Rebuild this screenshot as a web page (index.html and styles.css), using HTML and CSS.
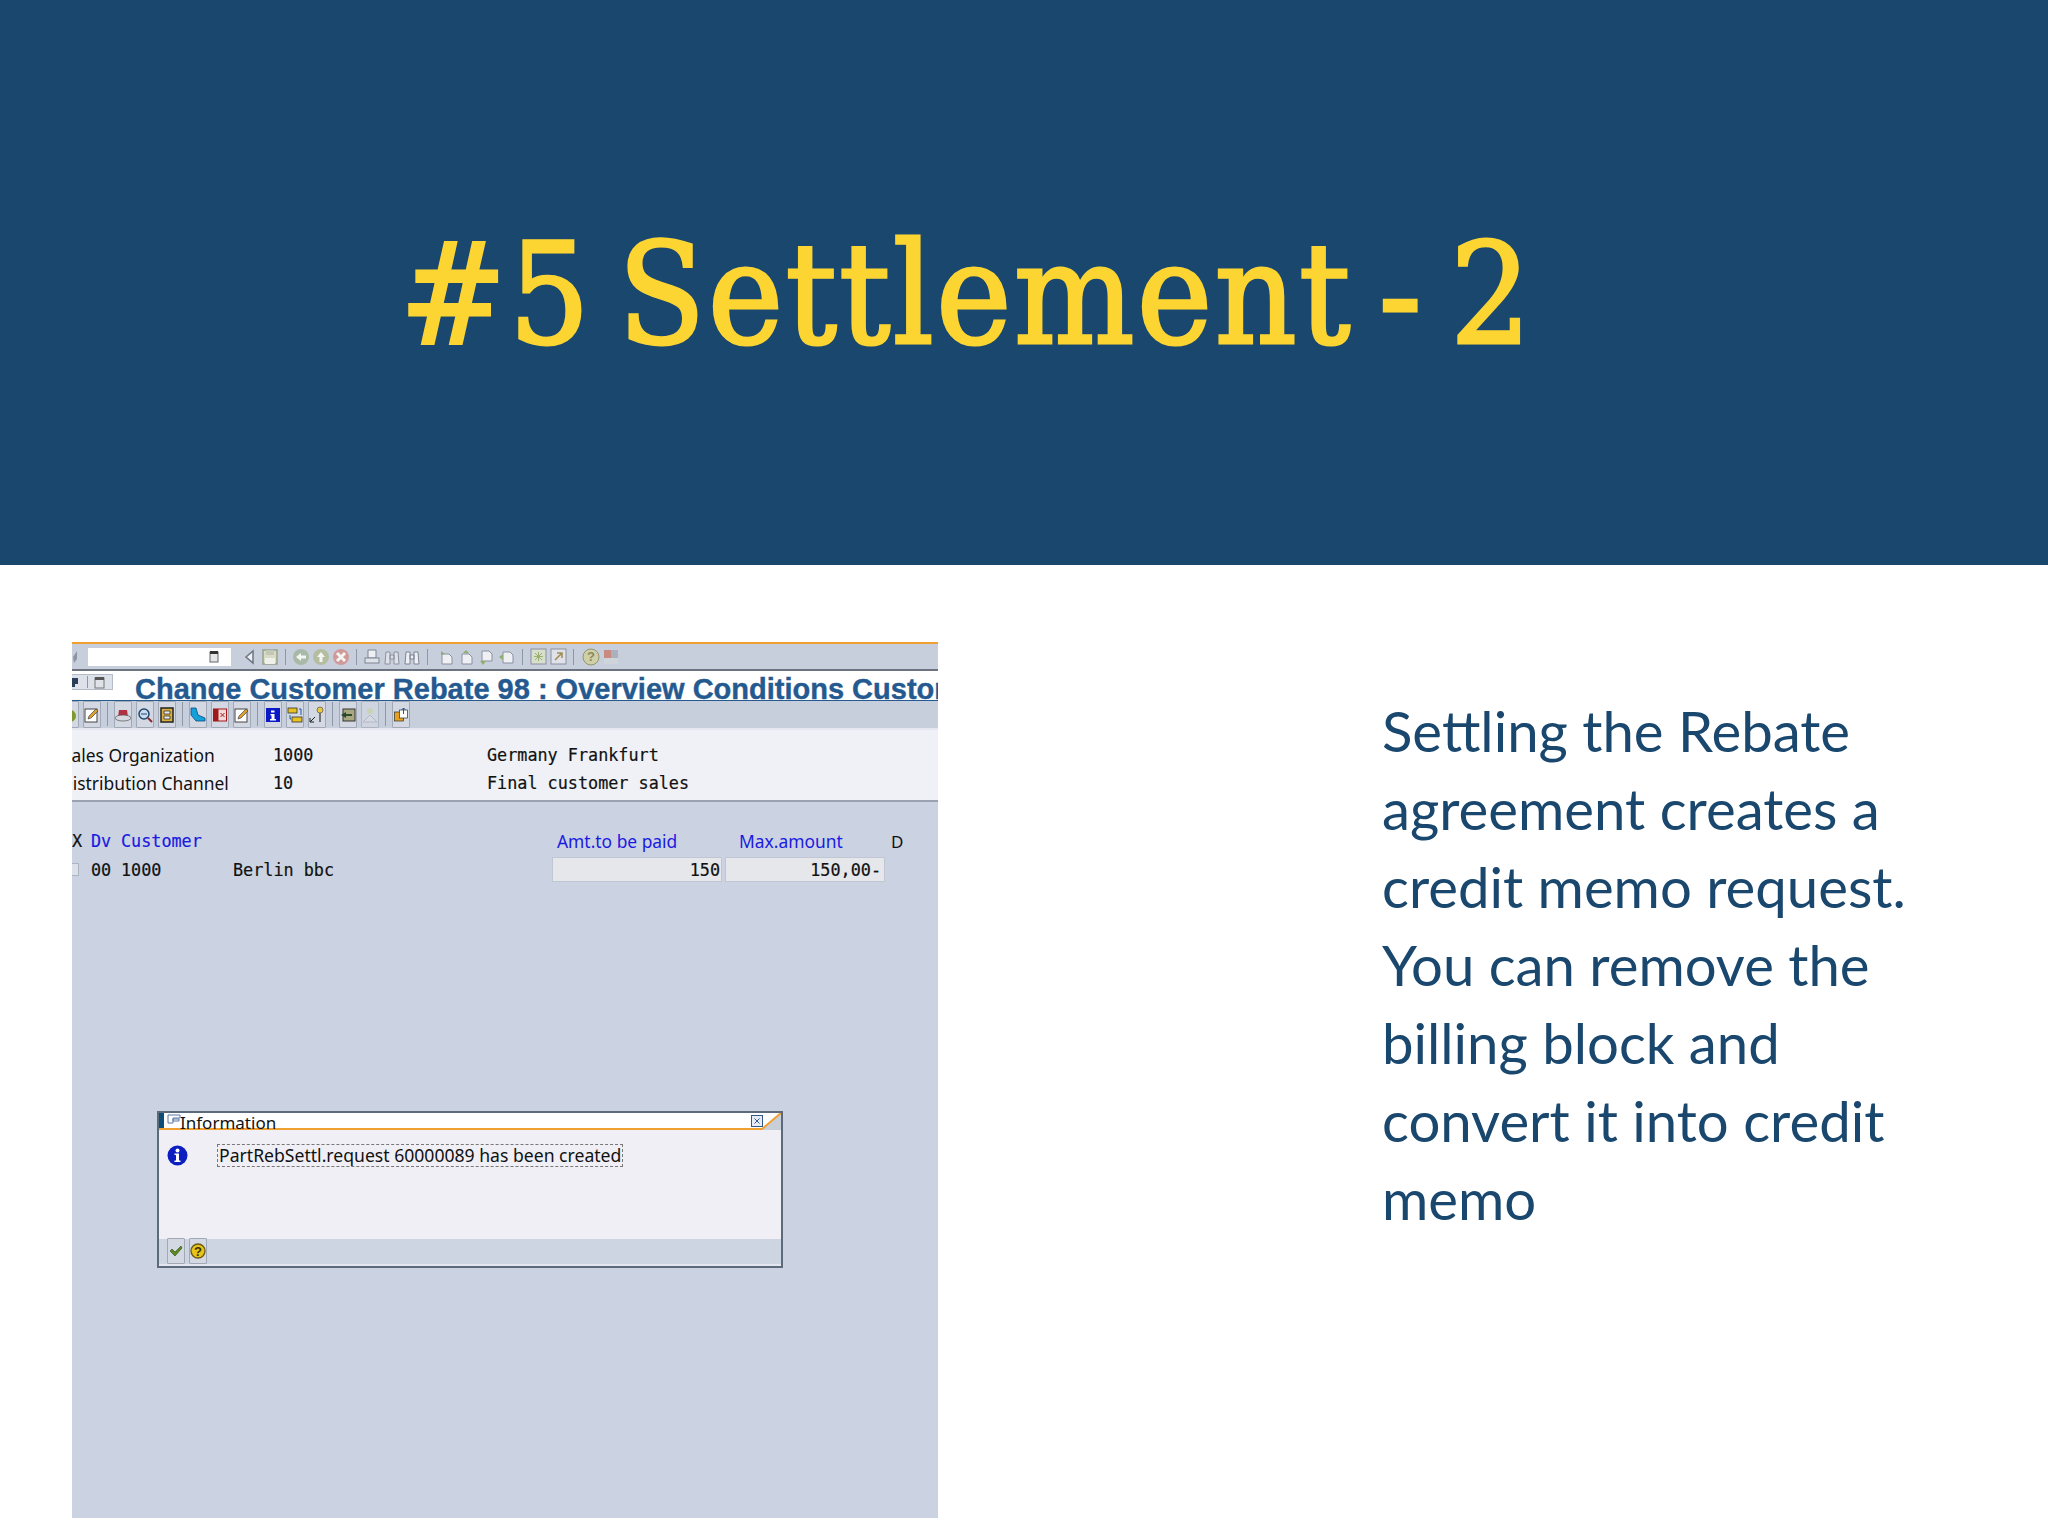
FILE: index.html
```html
<!DOCTYPE html>
<html lang="en">
<head>
    <meta charset="UTF-8">
    <title>#5 Settlement - 2</title>
    <link rel="stylesheet" href="styles.css">
</head>
<body>
    <header class="banner">
        <h1>#5 Settlement - 2</h1>
    </header>
    <main class="content">
        <div class="sap">
            <div class="sap-top">
                <span class="sap-cut"><svg width="6" height="14" viewBox="0 0 6 14"><path d="M5 1L1 7l1 6 3-4z" fill="#8e95a2"/></svg></span>
                <div class="sap-input">
                    <svg width="10" height="13" viewBox="0 0 10 13"><rect x="1" y="2" width="8" height="10" fill="#e4e6ea" stroke="#666"/><rect x="1" y="1" width="8" height="3" fill="#333"/></svg>
                </div>
                <span class="ico"><svg width="14" height="16" viewBox="0 0 14 16"><path d="M10 2L3 8l7 6z" fill="#eef0f4" stroke="#6d7480" stroke-width="1.5"/></svg></span>
                <span class="ico"><svg width="16" height="16" viewBox="0 0 16 16"><rect x="1" y="1" width="14" height="14" fill="#d8dbc8" stroke="#98a08c" stroke-width="1.5"/><rect x="4" y="1" width="8" height="5" fill="#c2c8b6"/><rect x="3" y="9" width="10" height="6" fill="#eef0ea"/></svg></span>
                <i class="sep"></i>
                <span class="ico"><svg width="18" height="18" viewBox="0 0 18 18"><circle cx="9" cy="9" r="8" fill="#a9b9a8"/><path d="M4 9l5-4v2.500h5v3H9V13z" fill="#f4f6f2"/></svg></span>
                <span class="ico"><svg width="18" height="18" viewBox="0 0 18 18"><circle cx="9" cy="9" r="8" fill="#b5bda0"/><path d="M9 4l4 5h-2.500v5h-3V9H5z" fill="#f4f6f2"/></svg></span>
                <span class="ico"><svg width="18" height="18" viewBox="0 0 18 18"><circle cx="9" cy="9" r="8" fill="#d09a9a"/><path d="M5 5l8 8M13 5l-8 8" stroke="#f4f6f2" stroke-width="3"/></svg></span>
                <i class="sep"></i>
                <span class="ico"><svg width="18" height="18" viewBox="0 0 18 18"><path d="M5 2h8v8H5z" fill="#eef0f4" stroke="#7c8492"/><rect x="2" y="10" width="14" height="5" fill="#dfe2e8" stroke="#7c8492"/></svg></span>
                <span class="ico"><svg width="18" height="18" viewBox="0 0 18 18"><path d="M3 4h4v12H2zM11 4h4l1 12h-5zM7 7h4v4H7z" fill="#dfe2e8" stroke="#8a90a0"/></svg></span>
                <span class="ico"><svg width="18" height="18" viewBox="0 0 18 18"><path d="M3 4h4v12H2zM11 4h4l1 12h-5zM7 7h4v4H7z" fill="#eef0f4" stroke="#7c8492"/></svg></span>
                <i class="sep sep-wide"></i>
                <span class="ico"><svg width="18" height="18" viewBox="0 0 18 18"><path d="M4 6h7l3 3v7H4z" fill="#eef0f4" stroke="#8a90a0"/><path d="M3 3l4 3-4 1z" fill="#8fae70"/></svg></span>
                <span class="ico"><svg width="18" height="18" viewBox="0 0 18 18"><path d="M4 6h7l3 3v7H4z" fill="#eef0f4" stroke="#8a90a0"/><path d="M8 2l3 3H5z" fill="#8fae70"/></svg></span>
                <span class="ico"><svg width="18" height="18" viewBox="0 0 18 18"><path d="M4 3h7l3 3v7H4z" fill="#eef0f4" stroke="#8a90a0"/><path d="M5 17l3-4H2z" fill="#8fae70"/></svg></span>
                <span class="ico"><svg width="18" height="18" viewBox="0 0 18 18"><path d="M5 4h7l3 3v8H5z" fill="#eef0f4" stroke="#8a90a0"/><path d="M1 9l4-3v6z" fill="#8fae70"/></svg></span>
                <i class="sep"></i>
                <span class="ico"><svg width="17" height="17" viewBox="0 0 17 17"><rect x="1" y="1" width="15" height="15" fill="#d8dfcc" stroke="#8a90a0"/><path d="M4 8.500h9M8.500 4v9M5 5l7 7M12 5l-7 7" stroke="#9ab070"/></svg></span>
                <span class="ico"><svg width="17" height="17" viewBox="0 0 17 17"><rect x="1" y="1" width="15" height="15" fill="#dfe2e8" stroke="#8a90a0"/><path d="M5 12l6-6M7 5h5v5" fill="none" stroke="#a08a50" stroke-width="1.500"/></svg></span>
                <i class="sep"></i>
                <span class="ico ico-help"><svg width="18" height="18" viewBox="0 0 18 18"><circle cx="9" cy="9" r="8" fill="#cfcfa8" stroke="#94946e"/><text x="9" y="13" class="ico-q">?</text></svg></span>
                <span class="ico"><svg width="16" height="18" viewBox="0 0 16 18"><rect x="1" y="2" width="7" height="8" fill="#c98a80"/><rect x="8" y="2" width="7" height="8" fill="#aab0bc"/><rect x="1" y="10" width="14" height="6" fill="#cfd3da"/></svg></span>
            </div>

            <div class="sap-title">
                <span class="sap-mini">
                    <svg width="8" height="13" viewBox="0 0 8 13"><path d="M0 2h6v6H3v3H0z" fill="#2a3f5a"/></svg>
                    <i class="sep"></i>
                    <svg width="11" height="13" viewBox="0 0 11 13"><rect x="1" y="2" width="9" height="10" fill="#dfe2e8" stroke="#777"/><rect x="1" y="1" width="9" height="3" fill="#555"/></svg>
                </span>
                <h2>Change Customer Rebate 98 : Overview Conditions Customer</h2>
            </div>

            <div class="sap-tools">
                <span class="btn btn-cut"><svg width="14" height="18" viewBox="0 0 14 18"><ellipse cx="7" cy="10" rx="6" ry="6" fill="#7e9a2c"/><path d="M2 3l5 3" stroke="#333"/></svg></span>
                <span class="btn"><svg width="16" height="16" viewBox="0 0 16 16"><rect x="1" y="2" width="12" height="13" fill="#fff" stroke="#444"/><path d="M4 12l1-3 7-7 2 2-7 7z" fill="#e0a030" stroke="#444" stroke-width=".7"/></svg></span>
                <i class="sep"></i>
                <span class="btn"><svg width="16" height="14" viewBox="0 0 16 14"><path d="M4 2h8l1 7H3z" fill="#b03040"/><ellipse cx="8" cy="10" rx="8" ry="3" fill="#d8d8e0" stroke="#555" stroke-width=".7"/></svg></span>
                <span class="btn"><svg width="16" height="16" viewBox="0 0 16 16"><circle cx="7" cy="7" r="5" fill="#c8def0" stroke="#24456e" stroke-width="1.500"/><path d="M11 11l4 4" stroke="#8a2a2a" stroke-width="2"/><path d="M4 7h6" stroke="#24456e"/></svg></span>
                <span class="btn"><svg width="14" height="16" viewBox="0 0 14 16"><rect x="1" y="1" width="12" height="14" fill="#d8b040" stroke="#222" stroke-width="1.500"/><path d="M4 4h6v3H4zM4 9h6v3H4z" fill="#e8e8e8" stroke="#222" stroke-width=".7"/></svg></span>
                <i class="sep"></i>
                <span class="btn"><svg width="16" height="16" viewBox="0 0 16 16"><path d="M1 1h5l2 7 7 3v3H6L1 8z" fill="#14a0d8" stroke="#0c4a80" stroke-width=".8"/></svg></span>
                <span class="btn"><svg width="15" height="15" viewBox="0 0 15 15"><rect x="1" y="2" width="13" height="12" fill="#f2d8d8" stroke="#a01818"/><rect x="1" y="2" width="5" height="12" fill="#a01818"/><path d="M8 6l4 4M12 6l-4 4" stroke="#a01818"/></svg></span>
                <span class="btn"><svg width="16" height="16" viewBox="0 0 16 16"><rect x="1" y="2" width="12" height="13" fill="#fff" stroke="#444"/><path d="M4 12l1-3 7-7 2 2-7 7z" fill="#e0a030" stroke="#444" stroke-width=".7"/></svg></span>
                <i class="sep"></i>
                <span class="btn"><svg width="14" height="14" viewBox="0 0 14 14"><rect width="14" height="14" fill="#0a18c8"/><path d="M5 2.500h3.500v2H5zM4.500 6h4v5h1.500v1.500H4V11h1.500V7.500h-1z" fill="#fff"/></svg></span>
                <span class="btn"><svg width="16" height="16" viewBox="0 0 16 16"><rect x="1" y="1" width="9" height="5" fill="#e8c020" stroke="#333" stroke-width=".8"/><rect x="5" y="10" width="10" height="5" fill="#e8c020" stroke="#333" stroke-width=".8"/><path d="M12 2h2v6M3 8v4h1" fill="none" stroke="#1a5aa0"/></svg></span>
                <span class="btn"><svg width="16" height="18" viewBox="0 0 16 18"><circle cx="11" cy="4" r="3" fill="#e8c840" stroke="#555" stroke-width=".7"/><path d="M11 7v9" stroke="#555" stroke-width="1.500"/><path d="M1 16l5-5M1 12v4h4" fill="none" stroke="#222"/></svg></span>
                <i class="sep"></i>
                <span class="btn"><svg width="16" height="14" viewBox="0 0 16 14"><rect x="3" y="1" width="12" height="12" fill="#a8a880" stroke="#333"/><path d="M1 7l5-3v2h6v2H6v2z" fill="#2a4a2a"/></svg></span>
                <span class="btn btn-off"><svg width="16" height="16" viewBox="0 0 16 16"><circle cx="8" cy="4" r="3" fill="#c8d4a8"/><path d="M1 15l7-7 7 7z" fill="#d8dce4" stroke="#aab0bc"/></svg></span>
                <i class="sep"></i>
                <span class="btn"><svg width="15" height="16" viewBox="0 0 15 16"><rect x="1" y="5" width="9" height="9" fill="#e8a020" stroke="#333" stroke-width=".7"/><rect x="6" y="3" width="8" height="8" fill="#fff" stroke="#333" stroke-width=".7"/><path d="M10 1v6M8 3l2-2 2 2" fill="none" stroke="#1a5aa0"/></svg></span>
            </div>

            <div class="sap-head">
                <span class="lbl cut-s">Sales Organization</span>
                <span class="mono">1000</span>
                <span class="mono">Germany Frankfurt</span>
                <span class="lbl cut-d">Distribution Channel</span>
                <span class="mono">10</span>
                <span class="mono">Final customer sales</span>
            </div>

            <div class="sap-table">
                <span class="mono">X</span>
                <span class="mono blue">Dv</span>
                <span class="mono blue">Customer</span>
                <span></span>
                <span class="lbl blue pad-amt">Amt.to be paid</span>
                <span class="lbl blue pad-max">Max.amount</span>
                <span class="lbl pad-d">D</span>

                <span class="check"></span>
                <span class="mono">00</span>
                <span class="mono">1000</span>
                <span class="mono">Berlin bbc</span>
                <span class="mono field field-amt">150</span>
                <span class="mono field">150,00-</span>
                <span></span>
            </div>

            <div class="dialog">
                <div class="dialog-title">
                    <i class="dialog-mark"></i>
                    <svg class="dialog-ico" width="14" height="13" viewBox="0 0 14 13"><path d="M1 1h12v3H6v5H1zM6 5h6v2H6z" fill="#fff" stroke="#5a78a8"/></svg>
                    <span class="dialog-name">Information</span>
                    <span class="dialog-close"><svg width="10" height="10" viewBox="0 0 10 10"><path d="M2.500 2.500l5 5M7.500 2.500l-5 5" stroke="#33588c"/></svg></span>
                    <svg class="dialog-corner" width="24" height="17" viewBox="0 0 24 17"><path d="M24 0v17H4z" fill="#c9cfd9"/><path d="M0 16h5L24 0" fill="none" stroke="#f0a030" stroke-width="2"/></svg>
                </div>
                <div class="dialog-body">
                    <svg width="21" height="21" viewBox="0 0 21 21"><circle cx="10.500" cy="10.500" r="10" fill="#0c1ec0"/><circle cx="10.500" cy="5.500" r="2" fill="#fff"/><path d="M7.500 8.500h4.500v7h1.500v1.500h-6v-1.500H9v-5.500H7.500z" fill="#fff"/></svg>
                    <span class="dialog-msg">PartRebSettl.request 60000089 has been created</span>
                </div>
                <div class="dialog-foot">
                    <span class="btn"><svg width="14" height="12" viewBox="0 0 14 12"><path d="M1 6l2-2 3 3 6-6 1 2-7 8z" fill="#5a8a20" stroke="#2e4a10" stroke-width=".6"/></svg></span>
                    <span class="btn"><svg width="16" height="16" viewBox="0 0 16 16"><circle cx="8" cy="8" r="7" fill="#e8c418" stroke="#6a5a10" stroke-width="1.300"/><text x="8" y="12.500" class="ico-q ico-q-dark">?</text></svg></span>
                </div>
            </div>
        </div>

        <p class="note">Settling the Rebate agreement creates a credit memo request. You can remove the billing block and convert it into credit memo</p>
    </main>
</body>
</html>
```

FILE: styles.css
```css
body {
    margin: 0;
    background: #fff;
    width: 2048px;
    height: 1536px;
    overflow: hidden;
    font-family: "Lato", sans-serif;
}

.banner {
    height: 565px;
    box-sizing: border-box;
    background: #1a476e;
    display: flex;
    align-items: center;
    padding: 22px 0 0 400px;
}
.banner h1 {
    margin: 0;
    color: #fdd532;
    font-family: "DejaVu Serif Condensed", "DejaVu Serif", serif;
    font-weight: 400;
    font-size: 141px;
    letter-spacing: 2.7px;
    word-spacing: -17px;
    -webkit-text-stroke: 3px #fdd532;
    white-space: nowrap;
}

.content {
    display: flex;
    align-items: flex-start;
    padding: 77px 0 0 72px;
}
.note {
    width: 560px;
    margin: 0 0 0 444px;
    padding-top: 49px;
    color: #1a476e;
    font-size: 56.3px;
    line-height: 78px;
}

/* sap screenshot */
.sap {
    position: relative;
    width: 866px;
    height: 876px;
    flex: none;
    overflow: hidden;
    background: #cbd3e2;
    display: flex;
    flex-direction: column;
    color: #111;
}
.sep {
    width: 1px;
    height: 16px;
    background: #8e97a6;
    flex: none;
}
.mono {
    font-family: "DejaVu Sans Mono", monospace;
    font-size: 16.8px;
    -webkit-text-stroke: .2px currentColor;
    white-space: nowrap;
}
.lbl {
    font-family: "Noto Sans", sans-serif;
    font-size: 17.4px;
    white-space: nowrap;
}
.blue {
    color: #1a1ae0;
}

.sap-top {
    height: 25px;
    border-top: 2px solid #f0a030;
    border-bottom: 2px solid #6d7480;
    background: #c8cfdc;
    display: flex;
    align-items: center;
    flex: none;
}
.sap-cut {
    width: 16px;
    height: 14px;
    flex: none;
}
.sap-cut svg {
    display: block;
}
.sap-input {
    width: 143px;
    height: 18px;
    background: #fff;
    display: flex;
    align-items: center;
    justify-content: flex-end;
    padding-right: 12px;
    box-sizing: border-box;
    margin-right: 9px;
}
.ico {
    width: 20px;
    height: 20px;
    display: flex;
    align-items: center;
    justify-content: center;
}
.ico-help {
    margin-left: 2px;
}
.ico-q {
    font-family: "Liberation Sans", sans-serif;
    font-size: 13px;
    font-weight: 700;
    text-anchor: middle;
    fill: #8a8a5c;
}
.ico-q-dark {
    fill: #3a3208;
}
.sap-top .sep {
    margin: 0 5px;
}
.sap-top .sep-wide {
    margin-right: 9px;
}

.sap-title {
    height: 29px;
    background: #fff;
    border-bottom: 1px solid #245a90;
    display: flex;
    overflow: hidden;
    flex: none;
}
.sap-mini {
    width: 41px;
    height: 16px;
    margin: 3px 0 0 0;
    background: #dde1e9;
    border: 1px solid #b5bcc8;
    border-left: 0;
    display: flex;
    align-items: center;
    justify-content: space-between;
    padding: 0 7px 0 0;
    box-sizing: border-box;
    flex: none;
}
.sap-mini .sep {
    height: 12px;
}
.sap-title h2 {
    margin: 2px 0 0 22px;
    color: #245a90;
    font-family: "Liberation Sans", sans-serif;
    font-size: 29px;
    font-weight: 700;
    -webkit-text-stroke: .4px #245a90;
    line-height: 32px;
    white-space: nowrap;
}

.sap-tools {
    height: 27px;
    background: #c8cfdc;
    border-bottom: 2px solid #e4e7ef;
    display: flex;
    gap: 4px;
    margin-left: -11px;
    flex: none;
}
.sap-tools .sep {
    height: 24px;
    margin: 1px 2px 0;
}
.btn {
    width: 18px;
    height: 27px;
    background: #d3d8e2;
    border: 1px solid #a2a9b6;
    box-sizing: border-box;
    display: flex;
    align-items: center;
    justify-content: center;
    flex: none;
    border-radius: 1px;
}
.btn svg {
    width: 16px;
}
.btn-off {
    opacity: .7;
}

.sap-head {
    height: 72px;
    box-sizing: border-box;
    background: #f0f1f6;
    border-bottom: 2px solid #9aa2b0;
    padding-top: 11px;
    display: grid;
    grid-template-columns: 201px 214px 1fr;
    grid-auto-rows: 28px;
    align-items: center;
    overflow: hidden;
    flex: none;
}
.cut-s {
    margin-left: -10px;
}
.cut-d {
    margin-left: -12px;
}

.sap-table {
    padding-top: 25px;
    display: grid;
    grid-template-columns: 19px 30px 112px 319px 173px 160px 1fr;
    grid-template-rows: 28px 25px;
    row-gap: 2px;
    align-items: center;
}
.pad-amt {
    padding-left: 5px;
}
.pad-max {
    padding-left: 14px;
}
.pad-d {
    padding-left: 6px;
    color: #111;
    font-size: 17px;
}
.check {
    width: 6px;
    height: 11px;
    background: #dbe0ea;
    border: 1px solid #aeb5c2;
    border-left: 0;
}
.field {
    height: 25px;
    line-height: 25px;
    box-sizing: border-box;
    background: #e6e7ea;
    border: 1px solid #c0c6d2;
    text-align: right;
    padding-right: 3px;
}
.field-amt {
    padding-right: 1px;
    margin-right: 3px;
}

/* popup */
.dialog {
    position: absolute;
    left: 85px;
    top: 469px;
    width: 626px;
    height: 157px;
    box-sizing: border-box;
    border: 2px solid #5d6a7c;
    background: #efeff5;
    display: flex;
    flex-direction: column;
}
.dialog-title {
    position: relative;
    height: 15px;
    background: #fff;
    border-bottom: 2px solid #f0a030;
    display: flex;
    align-items: flex-start;
    flex: none;
}
.dialog-mark {
    width: 5px;
    height: 15px;
    background: #0d4d78;
    flex: none;
}
.dialog-ico {
    margin: 1px 0 0 3px;
}
.dialog-name {
    font-family: "Noto Sans", sans-serif;
    font-size: 17px;
    line-height: 22px;
    margin-left: -1px;
    position: relative;
    top: -1px;
}
.dialog-close {
    position: absolute;
    right: 18px;
    top: 2px;
    width: 10px;
    height: 10px;
    border: 1px solid #33588c;
    background: #e8edf5;
}
.dialog-close svg {
    display: block;
}
.dialog-corner {
    position: absolute;
    right: 0;
    top: 0;
}
.dialog-body {
    display: flex;
    align-items: center;
    padding: 14px 0 0 8px;
    gap: 29px;
    flex: none;
}
.dialog-msg {
    font-family: "Noto Sans", sans-serif;
    font-size: 17.6px;
    line-height: 21px;
    border: 1px dashed #777;
    padding: 0 1px;
    white-space: nowrap;
}
.dialog-foot {
    margin-top: auto;
    height: 27px;
    box-sizing: border-box;
    background: #cdd4e2;
    border-bottom: 2px solid #e4e7ef;
    padding-left: 8px;
    display: flex;
    gap: 4px;
    flex: none;
}
.dialog-foot .btn {
    height: 26px;
    margin-top: -1px;
}
```
